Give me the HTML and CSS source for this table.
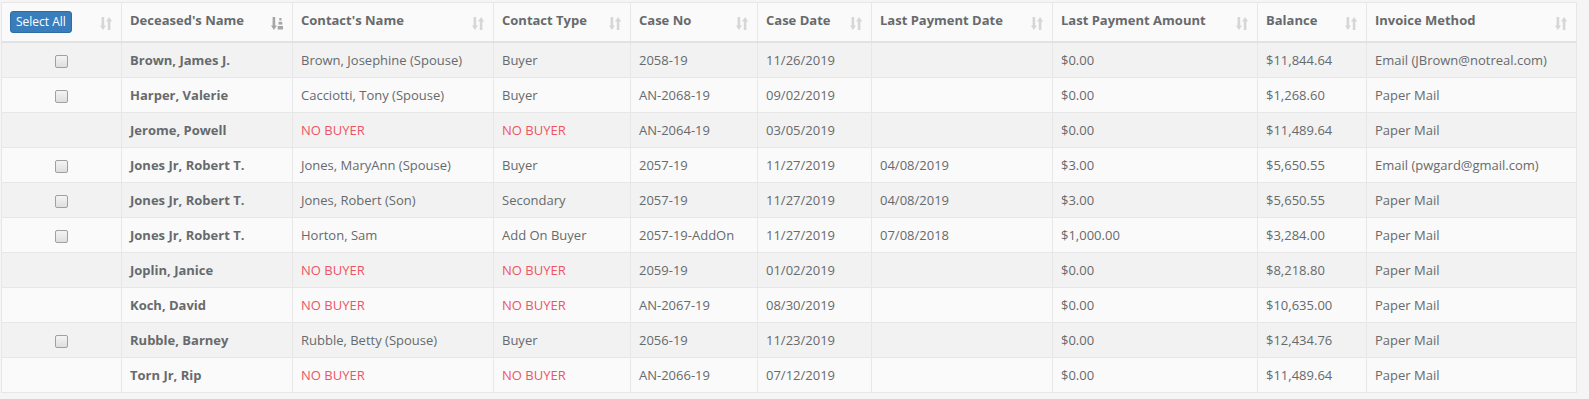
FILE: index.html
```html
<!DOCTYPE html>
<html>
<head>
<meta charset="utf-8">
<link rel="stylesheet" href="styles.css">
</head>
<body>
<div class="wrap">
<table class="grid">
<colgroup>
<col class="c1"><col class="c2"><col class="c3"><col class="c4"><col class="c5"><col class="c6"><col class="c7"><col class="c8"><col class="c9"><col class="c10">
</colgroup>
<thead>
<tr>
<th><div class="th"><button class="btn">Select All</button><svg class="sort" viewBox="0 0 12 13"><path d="M1.6 0h2.6v8.5H6L2.9 13 0 8.5h1.6z"/><path d="M9.1 0L12.2 4.5h-1.8V13H7.8V4.5H6z"/></svg></div></th>
<th><div class="th"><span>Deceased's Name</span><svg class="sort active" viewBox="0 0 12 13"><path d="M1.6 0h2.6v8.5H6L2.9 13 0 8.5h1.6z"/><rect x="8.3" y="1" width="2.2" height="2.5"/><rect x="7.5" y="4.8" width="3.8" height="2.8"/><rect x="6.7" y="9" width="5.3" height="3.5"/></svg></div></th>
<th><div class="th"><span>Contact's Name</span><svg class="sort" viewBox="0 0 12 13"><path d="M1.6 0h2.6v8.5H6L2.9 13 0 8.5h1.6z"/><path d="M9.1 0L12.2 4.5h-1.8V13H7.8V4.5H6z"/></svg></div></th>
<th><div class="th"><span>Contact Type</span><svg class="sort" viewBox="0 0 12 13"><path d="M1.6 0h2.6v8.5H6L2.9 13 0 8.5h1.6z"/><path d="M9.1 0L12.2 4.5h-1.8V13H7.8V4.5H6z"/></svg></div></th>
<th><div class="th"><span>Case No</span><svg class="sort" viewBox="0 0 12 13"><path d="M1.6 0h2.6v8.5H6L2.9 13 0 8.5h1.6z"/><path d="M9.1 0L12.2 4.5h-1.8V13H7.8V4.5H6z"/></svg></div></th>
<th><div class="th"><span>Case Date</span><svg class="sort" viewBox="0 0 12 13"><path d="M1.6 0h2.6v8.5H6L2.9 13 0 8.5h1.6z"/><path d="M9.1 0L12.2 4.5h-1.8V13H7.8V4.5H6z"/></svg></div></th>
<th><div class="th"><span>Last Payment Date</span><svg class="sort" viewBox="0 0 12 13"><path d="M1.6 0h2.6v8.5H6L2.9 13 0 8.5h1.6z"/><path d="M9.1 0L12.2 4.5h-1.8V13H7.8V4.5H6z"/></svg></div></th>
<th><div class="th"><span>Last Payment Amount</span><svg class="sort" viewBox="0 0 12 13"><path d="M1.6 0h2.6v8.5H6L2.9 13 0 8.5h1.6z"/><path d="M9.1 0L12.2 4.5h-1.8V13H7.8V4.5H6z"/></svg></div></th>
<th><div class="th"><span>Balance</span><svg class="sort" viewBox="0 0 12 13"><path d="M1.6 0h2.6v8.5H6L2.9 13 0 8.5h1.6z"/><path d="M9.1 0L12.2 4.5h-1.8V13H7.8V4.5H6z"/></svg></div></th>
<th><div class="th"><span>Invoice Method</span><svg class="sort" viewBox="0 0 12 13"><path d="M1.6 0h2.6v8.5H6L2.9 13 0 8.5h1.6z"/><path d="M9.1 0L12.2 4.5h-1.8V13H7.8V4.5H6z"/></svg></div></th>
</tr>
</thead>
<tbody>
<tr><td class="cb"><input type="checkbox"></td><td class="name">Brown, James J.</td><td>Brown, Josephine (Spouse)</td><td>Buyer</td><td>2058-19</td><td>11/26/2019</td><td></td><td>$0.00</td><td>$11,844.64</td><td>Email (JBrown@notreal.com)</td></tr>
<tr><td class="cb"><input type="checkbox"></td><td class="name">Harper, Valerie</td><td>Cacciotti, Tony (Spouse)</td><td>Buyer</td><td>AN-2068-19</td><td>09/02/2019</td><td></td><td>$0.00</td><td>$1,268.60</td><td>Paper Mail</td></tr>
<tr><td class="cb"></td><td class="name">Jerome, Powell</td><td class="red">NO BUYER</td><td class="red">NO BUYER</td><td>AN-2064-19</td><td>03/05/2019</td><td></td><td>$0.00</td><td>$11,489.64</td><td>Paper Mail</td></tr>
<tr><td class="cb"><input type="checkbox"></td><td class="name">Jones Jr, Robert T.</td><td>Jones, MaryAnn (Spouse)</td><td>Buyer</td><td>2057-19</td><td>11/27/2019</td><td>04/08/2019</td><td>$3.00</td><td>$5,650.55</td><td>Email (pwgard@gmail.com)</td></tr>
<tr><td class="cb"><input type="checkbox"></td><td class="name">Jones Jr, Robert T.</td><td>Jones, Robert (Son)</td><td>Secondary</td><td>2057-19</td><td>11/27/2019</td><td>04/08/2019</td><td>$3.00</td><td>$5,650.55</td><td>Paper Mail</td></tr>
<tr><td class="cb"><input type="checkbox"></td><td class="name">Jones Jr, Robert T.</td><td>Horton, Sam</td><td>Add On Buyer</td><td>2057-19-AddOn</td><td>11/27/2019</td><td>07/08/2018</td><td>$1,000.00</td><td>$3,284.00</td><td>Paper Mail</td></tr>
<tr><td class="cb"></td><td class="name">Joplin, Janice</td><td class="red">NO BUYER</td><td class="red">NO BUYER</td><td>2059-19</td><td>01/02/2019</td><td></td><td>$0.00</td><td>$8,218.80</td><td>Paper Mail</td></tr>
<tr><td class="cb"></td><td class="name">Koch, David</td><td class="red">NO BUYER</td><td class="red">NO BUYER</td><td>AN-2067-19</td><td>08/30/2019</td><td></td><td>$0.00</td><td>$10,635.00</td><td>Paper Mail</td></tr>
<tr><td class="cb"><input type="checkbox"></td><td class="name">Rubble, Barney</td><td>Rubble, Betty (Spouse)</td><td>Buyer</td><td>2056-19</td><td>11/23/2019</td><td></td><td>$0.00</td><td>$12,434.76</td><td>Paper Mail</td></tr>
<tr><td class="cb"></td><td class="name">Torn Jr, Rip</td><td class="red">NO BUYER</td><td class="red">NO BUYER</td><td>AN-2066-19</td><td>07/12/2019</td><td></td><td>$0.00</td><td>$11,489.64</td><td>Paper Mail</td></tr>
</tbody>
</table>
</div>
</body>
</html>
```
FILE: styles.css
```css
html, body {
  margin: 0;
  padding: 0;
  background: #f5f5f5;
  font-family: "Open Sans", "Liberation Sans", sans-serif;
  font-size: 13px;
  color: #676a6c;
}
.wrap {
  padding: 2px 0 0 1px;
}
.grid {
  border-collapse: collapse;
  table-layout: fixed;
  width: 1576px;
  background: #fafafa;
  border: 1px solid #e7e7e7;
}
.c1 { width: 120px; }
.c2 { width: 171px; }
.c3 { width: 201px; }
.c4 { width: 137px; }
.c5 { width: 127px; }
.c6 { width: 114px; }
.c7 { width: 181px; }
.c8 { width: 205px; }
.c9 { width: 109px; }
.c10 { width: 210px; }
.grid th, .grid td {
  border: 1px solid #e7e7e7;
  padding: 8px;
  text-align: left;
  line-height: 18px;
  white-space: nowrap;
  overflow: hidden;
}
.grid th {
  vertical-align: top;
  font-weight: 700;
  border-bottom: 2px solid #e2e2e2;
  height: 22px;
}
.th {
  display: flex;
  justify-content: space-between;
  align-items: flex-start;
}
.th span {
  line-height: 18px;
}
.sort {
  width: 12px;
  height: 13px;
  fill: #d6d6d6;
  margin-top: 6px;
  margin-right: 1px;
  flex: none;
}
.sort.active {
  fill: #a6a6a6;
}
.btn {
  font-family: "Open Sans", "Liberation Sans", sans-serif;
  font-size: 12px;
  line-height: 18px;
  height: 22px;
  padding: 1px 5px;
  color: #fff;
  background: #3a7dbd;
  border: 1px solid #2e6da4;
  border-radius: 3px;
  margin: 0;
}
.grid td {
  vertical-align: middle;
  height: 18px;
}
.grid tbody tr:nth-child(odd) {
  background: #f2f2f2;
}
.cb {
  text-align: center !important;
}
.cb input {
  appearance: none;
  -webkit-appearance: none;
  width: 13px;
  height: 13px;
  margin: 0;
  vertical-align: middle;
  border: 1px solid #a0a0a0;
  border-radius: 2px;
  background: linear-gradient(#f4f4f4, #dedede);
  display: inline-block;
}
.name {
  font-weight: 700;
}
.red {
  color: #ed5565;
}
```
